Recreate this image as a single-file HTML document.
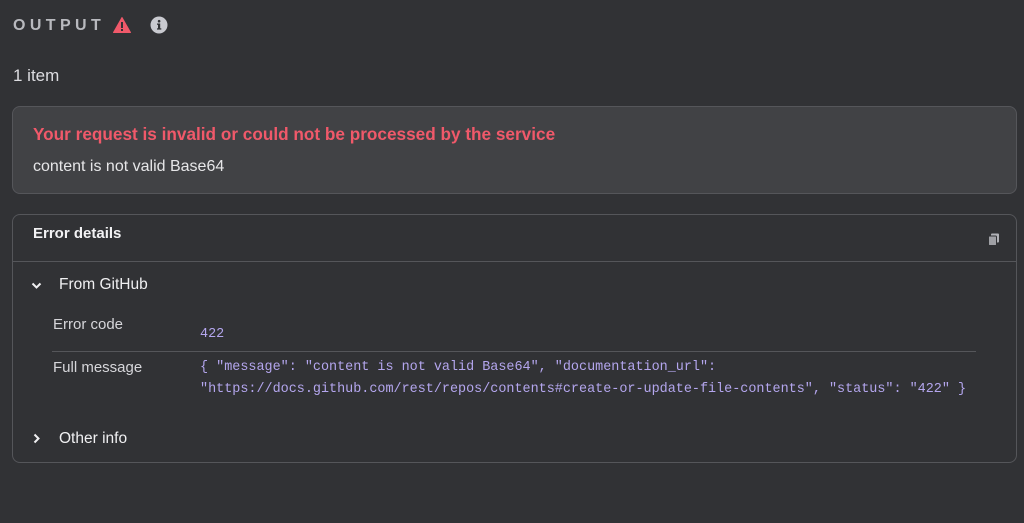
<!DOCTYPE html>
<html><head><meta charset="utf-8"><style>
*{margin:0;padding:0;box-sizing:border-box}
body{width:1024px;height:523px;background:#313235;font-family:"Liberation Sans",sans-serif;color:#e6e6e8;position:relative;overflow:hidden}
.abs{position:absolute;white-space:nowrap}
.mono{font-family:"Liberation Mono",monospace;font-size:13.45px;color:#b4a6ee}
</style></head><body>
<div class="abs" style="left:13px;top:17px;font-size:16px;letter-spacing:4.4px;color:#b8b9be;font-weight:bold">OUTPUT</div>
<svg class="abs" style="left:113px;top:17px" width="18" height="16" viewBox="0 0 18 16"><path d="M9 0.5 L17.5 15.5 H0.5 Z" fill="#f0596a" stroke="#f0596a" stroke-linejoin="round"/><rect x="8" y="5" width="2" height="6" fill="#313235"/><rect x="8" y="12" width="2" height="2" fill="#313235"/></svg>
<svg class="abs" style="left:150px;top:16px" width="18" height="18" viewBox="0 0 18 18"><circle cx="9" cy="9" r="8.5" fill="#c9cad0"/><rect x="8" y="7.5" width="2.2" height="6" fill="#313235"/><rect x="7" y="7.5" width="2" height="1.3" fill="#313235"/><rect x="7" y="12.3" width="4.3" height="1.3" fill="#313235"/><circle cx="9.1" cy="5.2" r="1.3" fill="#313235"/></svg>
<div class="abs" style="left:13px;top:66px;font-size:17px;color:#dcdce0">1 item</div>

<div class="abs" style="left:12px;top:106px;width:1005px;height:88px;background:#414245;border:1px solid #55565a;border-radius:8px"></div>
<div class="abs" style="left:33px;top:124px;font-size:17.2px;font-weight:bold;color:#f0596a">Your request is invalid or could not be processed by the service</div>
<div class="abs" style="left:33px;top:158px;font-size:16px;color:#e6e6e8">content is not valid Base64</div>

<div class="abs" style="left:12px;top:214px;width:1005px;height:249px;border:1px solid #55565a;border-radius:8px"></div>
<div class="abs" style="left:13px;top:261px;width:1003px;height:1px;background:#55565a"></div>
<div class="abs" style="left:33px;top:225px;font-size:15px;font-weight:bold;color:#f2f2f4">Error details</div>
<svg class="abs" style="left:988px;top:233px" width="12" height="13" viewBox="0 0 12 13"><rect x="3" y="0.5" width="8" height="9" rx="1" fill="#b0b1b6"/><rect x="0.5" y="3" width="8" height="9.5" rx="1" fill="#9fa0a5" stroke="#313235" stroke-width="1"/></svg>
<svg class="abs" style="left:31px;top:281px" width="11" height="9" viewBox="0 0 11 9"><path d="M1.5 2.5 L5.5 6.5 L9.5 2.5" fill="none" stroke="#f0f0f2" stroke-width="2"/></svg>
<div class="abs" style="left:59px;top:276px;font-size:15.5px;color:#f0f0f2">From GitHub</div>
<div class="abs" style="left:53px;top:316px;font-size:15px;color:#d6d6da">Error code</div>
<div class="abs mono" style="left:200px;top:327px">422</div>
<div class="abs" style="left:52px;top:351px;width:924px;height:1px;background:#55565a"></div>
<div class="abs" style="left:53px;top:359px;font-size:15px;color:#d6d6da">Full message</div>
<div class="abs mono" style="left:200px;top:360px">{ "message": "content is not valid Base64", "documentation_url":</div>
<div class="abs mono" style="left:200px;top:382px">"https://docs.github.com/rest/repos/contents#create-or-update-file-contents", "status": "422" }</div>
<svg class="abs" style="left:32px;top:433px" width="9" height="11" viewBox="0 0 9 11"><path d="M2.5 1.5 L6.5 5.5 L2.5 9.5" fill="none" stroke="#f0f0f2" stroke-width="2"/></svg>
<div class="abs" style="left:59px;top:430px;font-size:15.5px;color:#f0f0f2">Other info</div>
</body></html>
